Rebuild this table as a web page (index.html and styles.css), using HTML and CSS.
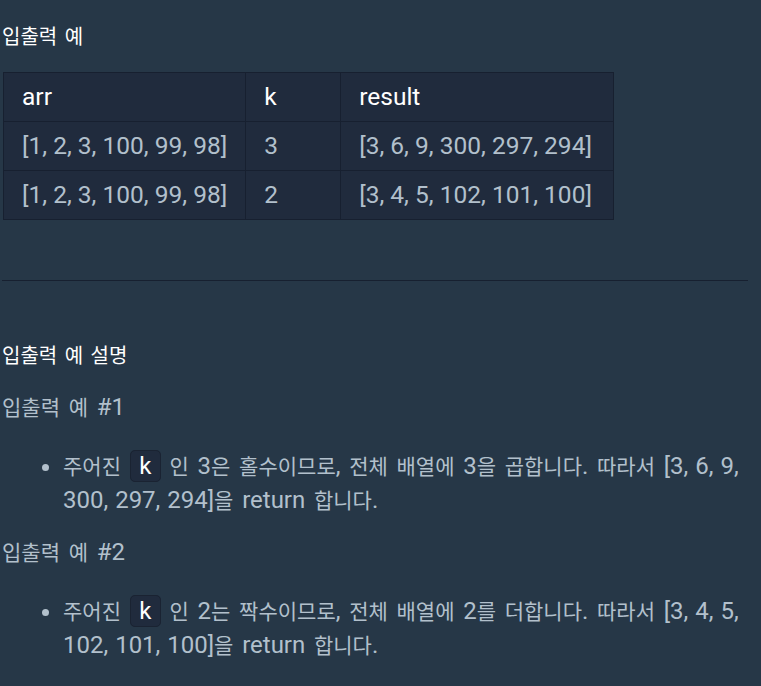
FILE: index.html
```html
<!DOCTYPE html>
<html lang="ko">
<head>
<meta charset="utf-8">
<link rel="stylesheet" href="styles.css">
</head>
<body>
<div class="content">
  <h5 class="heading heading-first">입출력 예</h5>
  <table class="io-table">
    <thead>
      <tr><th class="col-arr">arr</th><th class="col-k">k</th><th class="col-result">result</th></tr>
    </thead>
    <tbody>
      <tr><td>[1, 2, 3, 100, 99, 98]</td><td>3</td><td>[3, 6, 9, 300, 297, 294]</td></tr>
      <tr><td>[1, 2, 3, 100, 99, 98]</td><td>2</td><td>[3, 4, 5, 102, 101, 100]</td></tr>
    </tbody>
  </table>
  <hr class="divider">
  <h5 class="heading heading-second">입출력 예 설명</h5>
  <p class="para">입출력 예 <span class="en">#1</span></p>
  <ul class="list">
    <li>주어진 <code class="code">k</code> 인 <span class="en">3</span>은 홀수이므로<span class="en">,</span> 전체 배열에 <span class="en">3</span>을 곱합니다<span class="en">.</span> 따라서 <span class="en">[3, 6, 9, 300, 297, 294]</span>을 <span class="en">return</span> 합니다<span class="en">.</span></li>
  </ul>
  <p class="para">입출력 예 <span class="en">#2</span></p>
  <ul class="list">
    <li>주어진 <code class="code">k</code> 인 <span class="en">2</span>는 짝수이므로<span class="en">,</span> 전체 배열에 <span class="en">2</span>를 더합니다<span class="en">.</span> 따라서 <span class="en">[3, 4, 5, 102, 101, 100]</span>을 <span class="en">return</span> 합니다<span class="en">.</span></li>
  </ul>
</div>
</body>
</html>
```
FILE: styles.css
```css
html, body {
  margin: 0;
  padding: 0;
  background: #263747;
}
body {
  font-family: Roboto, "Noto Sans CJK KR", sans-serif;
  font-size: 21px;
  color: #b2c0cc;
  line-height: 34px;
  word-spacing: 3.5px;
}
.content {
  margin-left: 2px;
  width: 746px;
}
.en {
  font-size: 24px;
  line-height: 20px;
  word-spacing: 1px;
}
.heading {
  margin: 0;
  color: #ffffff;
  font-size: 20px;
  font-weight: 400;
  line-height: 34px;
  word-spacing: 2.5px;
}
.heading-first {
  margin-top: 20px;
}
.heading-second {
  margin-top: 58px;
}
.io-table {
  margin-top: 18px;
  margin-left: 1px;
  border-collapse: collapse;
  background: #202b3d;
  width: 611px;
  font-size: 24.5px;
  word-spacing: 0;
}
.io-table th,
.io-table td {
  border: 1px solid #172030;
  padding: 0 18px;
  height: 48px;
  text-align: left;
  vertical-align: middle;
  white-space: nowrap;
}
.io-table th {
  color: #ffffff;
  font-weight: 400;
}
.col-arr { width: 205px; }
.col-k { width: 58px; }
.divider {
  margin: 60px 0 0;
  border: 0;
  border-top: 1px solid #172030;
  height: 0;
}
.para {
  margin: 18px 0 0;
}
.list {
  margin: 24px 0 0;
  padding-left: 61px;
}
.list li::marker {
  font-size: 24px;
}
.code {
  display: inline;
  font-family: Roboto, sans-serif;
  font-size: 24px;
  line-height: 20px;
  padding: 1px 8.5px;
  color: #ffffff;
  background: #202b3d;
  border: 1px solid #1a2332;
  border-radius: 5px;
  word-spacing: 0;
}
```
